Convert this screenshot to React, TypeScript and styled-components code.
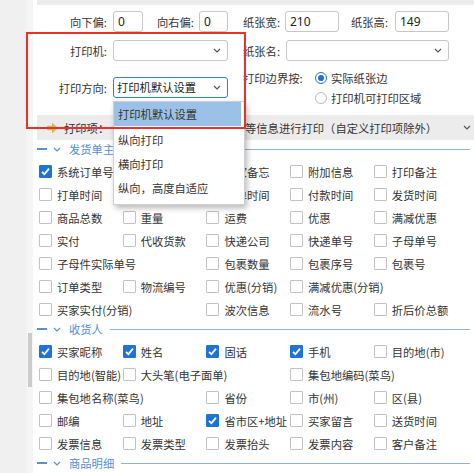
import React from 'react';
import styled, { createGlobalStyle } from 'styled-components';

const Global = createGlobalStyle`
  html, body { margin: 0; padding: 0; background: #fff; }
  body {
    font-family: "Noto Sans CJK SC", "Noto Sans", sans-serif;
    font-size: 11.3px;
    color: #333;
  }
  * { box-sizing: border-box; }
`;

const Page = styled.div`
  position: relative;
  display: flex;
  width: 474px;
  height: 473px;
  overflow: hidden;
  background: #fff;
`;

const SideStrip = styled.div`
  width: 27px;
  flex-shrink: 0;
  background: #f0f0f0;
`;

const ScrollTrack = styled.div`
  width: 6px;
  flex-shrink: 0;
  background: #f5f5f5;
  display: flex;
  flex-direction: column;
  padding-top: 333px;
`;

const ScrollThumb = styled.div`
  width: 4px;
  height: 54px;
  margin-left: 1px;
  background: #cbcbcb;
`;

const Main = styled.div`
  flex: 1;
  min-width: 0;
  display: flex;
  flex-direction: column;
  padding-left: 4px;
`;

const TopStrip = styled.div`
  height: 5px;
  background: #ececec;
`;

const FieldRow = styled.div<{ $mt: number }>`
  display: flex;
  align-items: center;
  height: 21px;
  margin-top: ${p => p.$mt}px;
`;

const Label = styled.span<{ $w: number; $align?: 'left' | 'right'; $pad: number }>`
  flex-shrink: 0;
  width: ${p => p.$w}px;
  text-align: ${p => p.$align ?? 'right'};
  ${p => (p.$align === 'left' ? `padding-left: ${p.$pad}px;` : `padding-right: ${p.$pad}px;`)}
  white-space: nowrap;
  line-height: 20px;
  color: #333;
`;

const TextInput = styled.div<{ $w: number }>`
  flex-shrink: 0;
  width: ${p => p.$w}px;
  height: 21px;
  border: 1px solid #c6c6c6;
  border-radius: 3px;
  padding: 0 4px;
  font-family: "Noto Sans", "Open Sans", sans-serif;
  font-size: 12px;
  line-height: 19px;
  color: #222;
  background: #fff;
`;

const SelectBox = styled.div<{ $w: number; $focused?: boolean }>`
  flex-shrink: 0;
  width: ${p => p.$w}px;
  height: 21px;
  border: 1px solid ${p => (p.$focused ? '#2f7de0' : '#c6c6c6')};
  border-radius: 3px;
  padding: 0 6px 0 3px;
  display: flex;
  align-items: center;
  justify-content: space-between;
  background: #fff;
  line-height: 19px;
  color: #222;
`;

const OptionsRow = styled.div`
  display: flex;
  align-items: flex-start;
  margin-top: 7px;
`;

const LeftGroup = styled.div`
  display: flex;
  align-items: center;
  padding-top: 9px;
`;

const RightGroup = styled.div`
  display: flex;
  align-items: flex-start;
`;

const RadioList = styled.div`
  display: flex;
  flex-direction: column;
`;

const RadioItem = styled.div`
  display: flex;
  align-items: center;
  gap: 4px;
  height: 20px;
`;

const RadioCircle = styled.span<{ $on?: boolean }>`
  width: 12px;
  height: 12px;
  border-radius: 50%;
  border: 1px solid ${p => (p.$on ? '#1f74d3' : '#b9b9b9')};
  background: #fff;
  display: flex;
  align-items: center;
  justify-content: center;
  &::after {
    content: '';
    width: 6px;
    height: 6px;
    border-radius: 50%;
    background: ${p => (p.$on ? '#1f74d3' : 'transparent')};
  }
`;

const GrayBar = styled.div`
  margin-top: 7px;
  height: 25px;
  background: #ececec;
  display: flex;
  align-items: center;
  padding: 0 3px 0 10px;
`;

const BarLabel = styled.span`
  margin-left: 6px;
  width: 45px;
  white-space: nowrap;
`;

const BarText = styled.span`
  margin-left: 136px;
  flex: 1;
  white-space: nowrap;
  overflow: hidden;
`;

const SectionHeader = styled.div<{ $mt: number }>`
  display: flex;
  align-items: center;
  height: 18px;
  margin-top: ${p => p.$mt}px;
  padding-right: 4px;
  color: #4f8fd6;
`;

const Dash = styled.span`
  width: 10px;
  height: 1.5px;
  background: #5a8fd2;
  flex-shrink: 0;
`;

const ChevronSlot = styled.span`
  margin-left: 6px;
  display: flex;
`;

const SectionTitle = styled.span`
  margin-left: 8px;
  white-space: nowrap;
`;

const SectionLine = styled.span`
  flex: 1;
  height: 1px;
  margin-left: 7px;
  background: #8db3dc;
`;

const Grid = styled.div<{ $mt: number }>`
  display: grid;
  grid-template-columns: repeat(5, 83.7px);
  grid-auto-rows: 23px;
  margin-left: 2px;
  margin-top: ${p => p.$mt}px;
`;

const Cell = styled.div`
  display: flex;
  align-items: center;
  gap: 5px;
  white-space: nowrap;
  overflow: visible;
  color: #333;
`;

const Box = styled.span<{ $on?: boolean }>`
  width: 13px;
  height: 13px;
  flex-shrink: 0;
  border: 1px solid ${p => (p.$on ? '#1f74d3' : '#c2c2c2')};
  background: ${p => (p.$on ? '#1f74d3' : '#fff')};
  border-radius: 1px;
  display: flex;
  align-items: center;
  justify-content: center;
`;

const Dropdown = styled.div`
  position: absolute;
  left: 113px;
  top: 101px;
  width: 132px;
  height: 104px;
  background: #fff;
  border: 1px solid #cfcfcf;
  box-shadow: 2px 3px 6px rgba(0, 0, 0, 0.28);
  padding: 0 3px 0 0;
  display: flex;
  flex-direction: column;
  z-index: 5;
`;

const DropItem = styled.div<{ $active?: boolean; $mt?: number }>`
  height: 24px;
  line-height: 24px;
  padding-left: 4px;
  margin-top: ${p => p.$mt ?? 0}px;
  background: ${p => (p.$active ? '#9bc2e6' : 'transparent')};
  color: #333;
  white-space: nowrap;
`;

const RedFrame = styled.div`
  position: absolute;
  left: 26px;
  top: 32px;
  width: 220px;
  height: 97px;
  border: 2px solid #e5322d;
  z-index: 6;
  pointer-events: none;
`;

const Chevron = ({ color = '#555' }: { color?: string }) => (
  <svg width="8" height="5" viewBox="0 0 8 5">
    <polyline points="1,1 4,4 7,1" fill="none" stroke={color} strokeWidth="1.2" />
  </svg>
);

const Check = () => (
  <svg width="11" height="11" viewBox="0 0 11 11">
    <polyline points="2,5.8 4.4,8.2 9,2.6" fill="none" stroke="#fff" strokeWidth="1.8" />
  </svg>
);

const ArrowIcon = () => (
  <svg width="11" height="10" viewBox="0 0 11 10">
    <polygon points="0.5,3.2 5.5,3.2 5.5,0.5 10.5,5 5.5,9.5 5.5,6.8 0.5,6.8" fill="#b3c95a" stroke="#d9a441" strokeWidth="0.8" />
  </svg>
);

type Item = { t: string; c?: boolean } | null;

const section1: Item[][] = [
  [{ t: '系统订单号', c: true }, null, { t: '卖家备忘' }, { t: '附加信息' }, { t: '打印备注' }],
  [{ t: '打单时间' }, null, { t: '下单时间' }, { t: '付款时间' }, { t: '发货时间' }],
  [{ t: '商品总数' }, { t: '重量' }, { t: '运费' }, { t: '优惠' }, { t: '满减优惠' }],
  [{ t: '实付' }, { t: '代收货款' }, { t: '快递公司' }, { t: '快递单号' }, { t: '子母单号' }],
  [{ t: '子母件实际单号' }, null, { t: '包裹数量' }, { t: '包裹序号' }, { t: '包裹号' }],
  [{ t: '订单类型' }, { t: '物流编号' }, { t: '优惠(分销)' }, { t: '满减优惠(分销)' }, null],
  [{ t: '买家实付(分销)' }, null, { t: '波次信息' }, { t: '流水号' }, { t: '折后价总额' }],
];

const section2: Item[][] = [
  [{ t: '买家昵称', c: true }, { t: '姓名', c: true }, { t: '固话', c: true }, { t: '手机', c: true }, { t: '目的地(市)' }],
  [{ t: '目的地(智能)' }, { t: '大头笔(电子面单)' }, null, { t: '集包地编码(菜鸟)' }, null],
  [{ t: '集包地名称(菜鸟)' }, null, { t: '省份' }, { t: '市(州)' }, { t: '区(县)' }],
  [{ t: '邮编' }, { t: '地址' }, { t: '省市区+地址', c: true }, { t: '买家留言' }, { t: '送货时间' }],
  [{ t: '发票信息' }, { t: '发票类型' }, { t: '发票抬头' }, { t: '发票内容' }, { t: '客户备注' }],
];

const CheckGrid = ({ rows, mt }: { rows: Item[][]; mt: number }) => (
  <Grid $mt={mt}>
    {rows.flat().map((it, i) =>
      it ? (
        <Cell key={i}>
          <Box $on={it.c}>{it.c && <Check />}</Box>
          <span>{it.t}</span>
        </Cell>
      ) : (
        <Cell key={i} />
      )
    )}
  </Grid>
);

const Section = ({ title, mt }: { title: string; mt: number }) => (
  <SectionHeader $mt={mt}>
    <Dash />
    <ChevronSlot>
      <Chevron color="#5a8fd2" />
    </ChevronSlot>
    <SectionTitle>{title}</SectionTitle>
    <SectionLine />
  </SectionHeader>
);

export default function App() {
  return (
    <>
      <Global />
      <Page>
        <SideStrip />
        <ScrollTrack>
          <ScrollThumb />
        </ScrollTrack>
        <Main>
          <TopStrip />
          <FieldRow $mt={6}>
            <Label $w={76} $pad={6}>向下偏:</Label>
            <TextInput $w={30}>0</TextInput>
            <Label $w={56} $pad={5}>向右偏:</Label>
            <TextInput $w={29}>0</TextInput>
            <Label $w={57} $align="left" $pad={15}>纸张宽:</Label>
            <TextInput $w={54}>210</TextInput>
            <Label $w={56} $align="left" $pad={12}>纸张高:</Label>
            <TextInput $w={54}>149</TextInput>
          </FieldRow>
          <FieldRow $mt={8}>
            <Label $w={76} $pad={6}>打印机:</Label>
            <SelectBox $w={115}>
              <span />
              <Chevron />
            </SelectBox>
            <Label $w={58} $align="left" $pad={15}>纸张名:</Label>
            <SelectBox $w={163}>
              <span />
              <Chevron />
            </SelectBox>
          </FieldRow>
          <OptionsRow>
            <LeftGroup>
              <Label $w={76} $pad={6}>打印方向:</Label>
              <SelectBox $w={115} $focused>
                <span>打印机默认设置</span>
                <Chevron />
              </SelectBox>
            </LeftGroup>
            <RightGroup>
              <Label $w={87} $align="left" $pad={15}>打印边界按:</Label>
              <RadioList>
                <RadioItem>
                  <RadioCircle $on />
                  <span>实际纸张边</span>
                </RadioItem>
                <RadioItem>
                  <RadioCircle />
                  <span>打印机可打印区域</span>
                </RadioItem>
              </RadioList>
            </RightGroup>
          </OptionsRow>
          <GrayBar>
            <ArrowIcon />
            <BarLabel>打印项：</BarLabel>
            <BarText>等信息进行打印（自定义打印项除外）</BarText>
            <Chevron />
          </GrayBar>
          <Section title="发货单主体" mt={0} />
          <CheckGrid rows={section1} mt={2} />
          <Section title="收货人" mt={-1} />
          <CheckGrid rows={section2} mt={2} />
          <Section title="商品明细" mt={-1} />
        </Main>
        <Dropdown>
          <DropItem $active>打印机默认设置</DropItem>
          <DropItem $mt={2}>纵向打印</DropItem>
          <DropItem>横向打印</DropItem>
          <DropItem>纵向，高度自适应</DropItem>
        </Dropdown>
        <RedFrame />
      </Page>
    </>
  );
}
